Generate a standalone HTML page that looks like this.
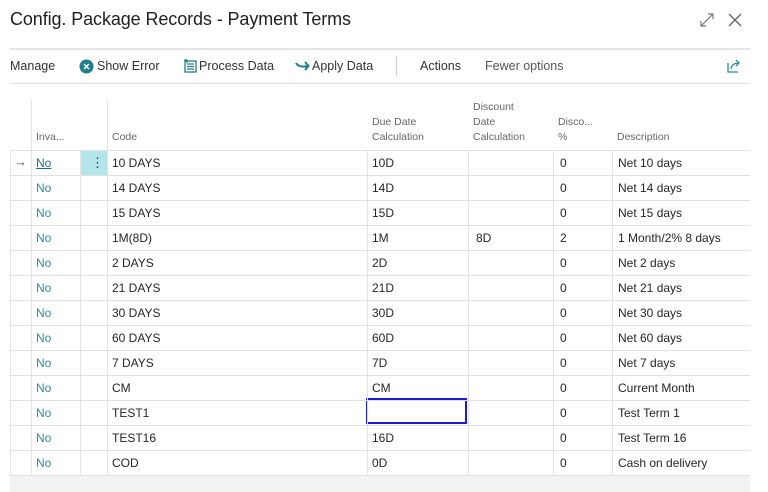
<!DOCTYPE html>
<html><head><meta charset="utf-8"><style>
*{margin:0;padding:0;box-sizing:border-box}
body{width:768px;height:492px;background:#fff;font-family:"Liberation Sans",sans-serif;color:#212121;position:relative;overflow:hidden;font-size:12px}
.a{position:absolute;white-space:nowrap}
.t{font-size:18px;color:#212121;left:10px;top:9px;letter-spacing:-0.1px}
.tb{font-size:12.5px;top:59px;color:#333}
.h{font-size:10.5px;color:#666;line-height:15px}
.hl{position:absolute;height:1px;background:#e1e1e1;left:10px;width:740px}
.vl{position:absolute;width:1px;background:#e4e4e4}
.c{font-size:12px;color:#262626}
.no{color:#2a8e9a}
</style></head><body>
<div class="a t">Config. Package Records - Payment Terms</div>
<svg class="a" style="left:699px;top:12px" width="16" height="16" viewBox="0 0 16 16"><path d="M2 14L14 2M9 2h5v5M2 9v5h5" stroke="#777" fill="none" stroke-width="1.2"/></svg>
<svg class="a" style="left:727px;top:12px" width="16" height="16" viewBox="0 0 16 16"><path d="M2 2L14 14M14 2L2 14" stroke="#666" fill="none" stroke-width="1.4"/></svg>
<div class="hl" style="top:48px;background:#e4e4e4;height:2px"></div>
<div class="hl" style="top:83px"></div>
<div class="a tb" style="left:10px">Manage</div>
<svg class="a" style="left:79px;top:59px" width="15" height="15"><circle cx="7.5" cy="7.5" r="7" fill="#1f7f8a"/><path d="M5 5l5 5M10 5l-5 5" stroke="#fff" stroke-width="1.5"/></svg>
<div class="a tb" style="left:97px">Show Error</div>
<svg class="a" style="left:183px;top:59px" width="14" height="14"><rect x="2" y="2" width="11" height="11" fill="none" stroke="#1f7f8a" stroke-width="1.3"/><path d="M4 5h7M4 7.5h7M4 10h7M1 1h3v3" stroke="#1f7f8a" stroke-width="1.2" fill="none"/></svg>
<div class="a tb" style="left:199px">Process Data</div>
<svg class="a" style="left:295px;top:60px" width="15" height="12"><path d="M1 3q3 5 12 3M10 2l3.5 4L10 10" stroke="#1f7f8a" stroke-width="2" fill="none"/></svg>
<div class="a tb" style="left:312px">Apply Data</div>
<div class="vl" style="left:396px;top:56px;height:20px;background:#ccc"></div>
<div class="a tb" style="left:420px">Actions</div>
<div class="a tb" style="left:485px;color:#555">Fewer options</div>
<svg class="a" style="left:727px;top:59px" width="14" height="14"><path d="M1 4v9h10M4 10q1-6 8-6M9 1l3 3-3 3" stroke="#2a8e9a" stroke-width="1.3" fill="none"/></svg>

<div class="a h" style="left:36px;top:130px">Inva...</div>
<div class="a h" style="left:112px;top:130px">Code</div>
<div class="a h" style="left:372px;top:115px">Due Date<br>Calculation</div>
<div class="a h" style="left:473px;top:100px">Discount<br>Date<br>Calculation</div>
<div class="a h" style="left:558px;top:115px">Disco...<br>%</div>
<div class="a h" style="left:617px;top:130px">Description</div>
<div class="vl" style="left:31px;top:100px;height:50px"></div>
<div class="vl" style="left:107px;top:100px;height:50px"></div>

<div class="a" style="left:10px;top:475px;width:740px;height:17px;background:#f3f3f3"></div>
<div class="a" style="left:80px;top:151px;width:27px;height:24px;background:#b3e6ea"></div>
<div class="a" style="left:91px;top:155px;color:#333;font-size:13px">⋮</div>
<div class="a" style="left:14px;top:154px;color:#555;font-size:13px">→</div>
<div class="a" style="left:366px;top:398px;width:101px;height:26px;border:2px solid #1a1ae0"></div>

<div id="g"></div>
<script>
var rows=[["10 DAYS","10D","","Net 10 days"],["14 DAYS","14D","","Net 14 days"],["15 DAYS","15D","","Net 15 days"],["1M(8D)","1M","8D","1 Month/2% 8 days","2"],["2 DAYS","2D","","Net 2 days"],["21 DAYS","21D","","Net 21 days"],["30 DAYS","30D","","Net 30 days"],["60 DAYS","60D","","Net 60 days"],["7 DAYS","7D","","Net 7 days"],["CM","CM","","Current Month"],["TEST1","","","Test Term 1"],["TEST16","16D","","Test Term 16"],["COD","0D","","Cash on delivery"]];
var h='';
[10,31,80,107,367,468,553,612].forEach(function(x){h+='<div class="vl" style="left:'+x+'px;top:150px;height:325px"></div>'});
for(var i=0;i<=13;i++)h+='<div class="hl" style="top:'+(150+i*25)+'px"></div>';
rows.forEach(function(r,i){var y=156+i*25;
h+='<div class="a c no" style="left:36px;top:'+y+'px;'+(i==0?'text-decoration:underline;color:#1f6f7a':'')+'">No</div>';
h+='<div class="a c" style="left:112px;top:'+y+'px">'+r[0]+'</div>';
h+='<div class="a c" style="left:372px;top:'+y+'px">'+r[1]+'</div>';
h+='<div class="a c" style="left:476px;top:'+y+'px">'+r[2]+'</div>';
h+='<div class="a c" style="left:560px;top:'+y+'px">'+(r[4]||'0')+'</div>';
h+='<div class="a c" style="left:618px;top:'+y+'px">'+r[3]+'</div>';});
document.getElementById('g').innerHTML=h;
</script>
</body></html>
